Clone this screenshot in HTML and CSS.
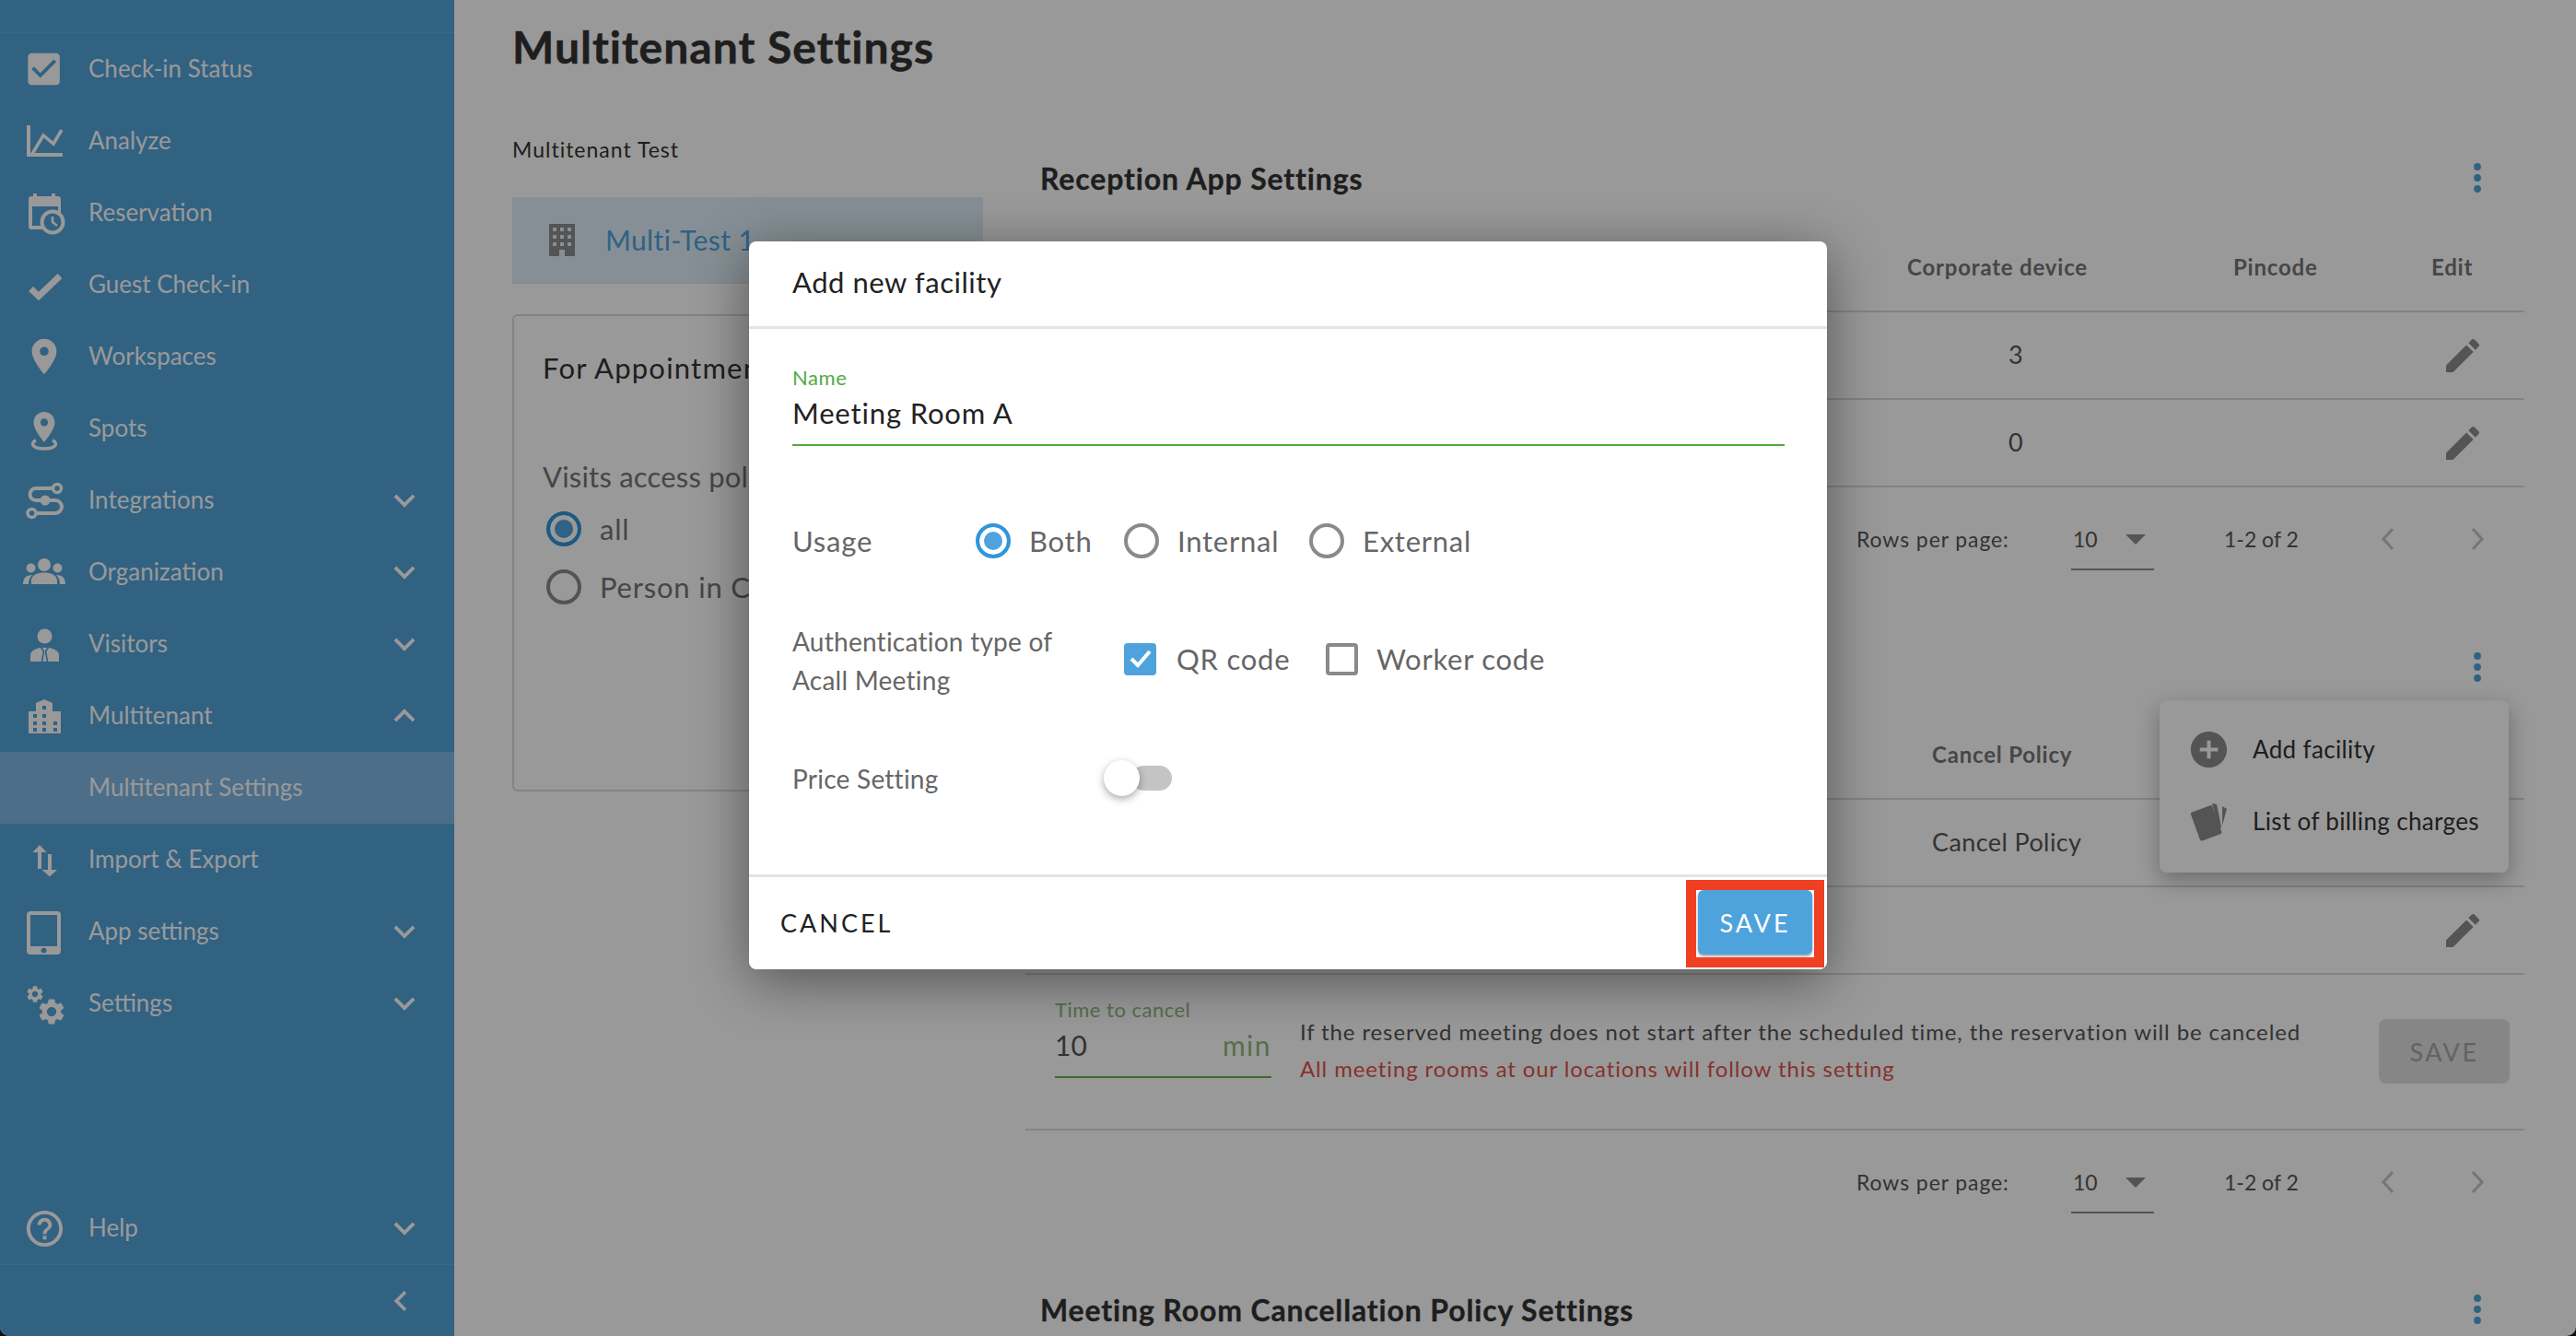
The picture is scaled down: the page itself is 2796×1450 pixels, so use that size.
FILE: index.html
```html
<!DOCTYPE html>
<html lang="en">
<head>
<meta charset="utf-8">
<title>Multitenant Settings</title>
<link rel="stylesheet" href="styles.css">
</head>
<body>
<svg class="defs" width="0" height="0">
  <symbol id="i-edit" viewBox="0 0 24 24"><path d="M3 17.25V21h3.75L17.81 9.94l-3.75-3.75L3 17.25zM20.71 7.04c.39-.39.39-1.02 0-1.41l-2.34-2.34c-.39-.39-1.02-.39-1.41 0l-1.83 1.83 3.75 3.75 1.83-1.83z"/></symbol>
  <symbol id="i-down" viewBox="0 0 24 24"><path d="M16.59 8.59L12 13.17 7.41 8.59 6 10l6 6 6-6z"/></symbol>
  <symbol id="i-up" viewBox="0 0 24 24"><path d="M7.41 15.41L12 10.83l4.59 4.58L18 14l-6-6-6 6z"/></symbol>
  <symbol id="i-gear" viewBox="0 0 24 24"><path d="M19.14 12.94c.04-.3.06-.61.06-.94 0-.32-.02-.64-.07-.94l2.03-1.58c.18-.14.23-.41.12-.61l-1.92-3.32c-.12-.22-.37-.29-.59-.22l-2.39.96c-.5-.38-1.03-.7-1.62-.94l-.36-2.54c-.04-.24-.24-.41-.48-.41h-3.84c-.24 0-.43.17-.47.41l-.36 2.54c-.59.24-1.13.57-1.62.94l-2.39-.96c-.22-.08-.47 0-.59.22L2.74 8.87c-.12.21-.08.47.12.61l2.03 1.58c-.05.3-.09.63-.09.94s.02.64.07.94l-2.03 1.58c-.18.14-.23.41-.12.61l1.92 3.32c.12.22.37.29.59.22l2.39-.96c.5.38 1.03.7 1.62.94l.36 2.54c.05.24.24.41.48.41h3.84c.24 0 .44-.17.47-.41l.36-2.54c.59-.24 1.13-.56 1.62-.94l2.39.96c.22.08.47 0 .59-.22l1.92-3.32c.12-.22.07-.47-.12-.61l-2.01-1.58zM12 15.6c-1.98 0-3.6-1.62-3.6-3.6s1.62-3.6 3.6-3.6 3.6 1.62 3.6 3.6-1.62 3.6-3.6 3.6z"/></symbol>
  <symbol id="i-kebab" viewBox="0 0 12 36"><circle cx="6" cy="6" r="3.9"/><circle cx="6" cy="18" r="3.9"/><circle cx="6" cy="30" r="3.9"/></symbol>
  <symbol id="i-prev" viewBox="0 0 20 26"><path d="M15 2L5 13l10 11" fill="none" stroke="currentColor" stroke-width="3"/></symbol>
  <symbol id="i-next" viewBox="0 0 20 26"><path d="M5 2l10 11L5 24" fill="none" stroke="currentColor" stroke-width="3"/></symbol>
</svg>

<div class="app">
  <nav class="sidebar">
    <div class="side-top"></div>
    <a class="nav-row"><span class="nav-icon"><svg width="46" height="46" viewBox="0 0 24 24"><path d="M19 3H5c-1.1 0-2 .9-2 2v14c0 1.1.9 2 2 2h14c1.1 0 2-.9 2-2V5c0-1.1-.9-2-2-2zm-9 14l-5-5 1.41-1.41L10 14.17l7.59-7.59L19 8l-9 9z" transform="translate(-.2 0)"/></svg></span><span class="nav-text">Check-in Status</span></a>
    <a class="nav-row"><span class="nav-icon"><svg width="48" height="48" viewBox="0 0 48 48"><path class="st" stroke-width="4" d="M7 7v32h37"/><path class="st" stroke-width="3.5" d="M11 38l12-20 11 9 9-15"/></svg></span><span class="nav-text">Analyze</span></a>
    <a class="nav-row"><span class="nav-icon"><svg width="48" height="48" viewBox="0 0 48 48"><path fill-rule="evenodd" d="M12 3h4v3h16V3h4v3h3a3 3 0 0 1 3 3v30a3 3 0 0 1-3 3H10a3 3 0 0 1-3-3V9a3 3 0 0 1 3-3h2zM11 17v21h28V17z"/><circle cx="33" cy="34" r="13.500"/><circle class="bg" cx="33" cy="34" r="9.500"/><path class="st" stroke-width="2.600" d="M33 28v6l5 4"/></svg></span><span class="nav-text">Reservation</span></a>
    <a class="nav-row"><span class="nav-icon"><svg width="48" height="48" viewBox="0 0 48 48"><path class="st" stroke-width="7" d="M9.500 28.500l8.500 8L41 14.500"/></svg></span><span class="nav-text">Guest Check-in</span></a>
    <a class="nav-row"><span class="nav-icon"><svg width="46" height="46" viewBox="0 0 24 24"><path d="M12 2C8.130 2 5 5.130 5 9c0 5.250 7 13 7 13s7-7.750 7-13c0-3.870-3.130-7-7-7zm0 9.500c-1.380 0-2.500-1.120-2.500-2.500s1.120-2.500 2.500-2.500 2.500 1.120 2.500 2.500-1.120 2.500-2.500 2.500z"/></svg></span><span class="nav-text">Workspaces</span></a>
    <a class="nav-row"><span class="nav-icon"><svg width="48" height="48" viewBox="0 0 48 48"><path transform="translate(4.300 2.700) scale(1.640)" d="M12 2C8.130 2 5 5.130 5 9c0 5.250 7 13 7 13s7-7.750 7-13c0-3.870-3.130-7-7-7zm0 9.500c-1.380 0-2.500-1.120-2.500-2.500s1.120-2.500 2.500-2.500 2.500 1.120 2.500 2.500-1.120 2.500-2.500 2.500z"/><path class="st" stroke-width="3.500" d="M15 37c-6 2-5 9 9 9s15-7 9-9"/></svg></span><span class="nav-text">Spots</span></a>
    <a class="nav-row"><span class="nav-icon"><svg width="48" height="48" viewBox="0 0 48 48"><path class="st" stroke-width="4" d="M33 11H15a6.500 6.500 0 0 0 0 13h21a7 7 0 0 1 0 14H15"/><circle class="st" stroke-width="3.500" cx="38" cy="11" r="4.500"/><circle class="st" stroke-width="3.500" cx="10.500" cy="38" r="4.500"/><circle cx="25" cy="24" r="5.500"/></svg></span><span class="nav-text">Integrations</span><svg class="chev" width="46" height="46"><use href="#i-down"/></svg></a>
    <a class="nav-row"><span class="nav-icon"><svg width="48" height="48" viewBox="0 0 48 48"><circle cx="24" cy="16" r="7"/><circle cx="9.500" cy="19.500" r="5"/><circle cx="38.500" cy="19.500" r="5"/><path d="M10 37v-4c0-6 7-8.500 14-8.500S38 27 38 33v4zM1 37c0-6 3-10 10-10-2 2-4 5-4 10zM47 37c0-6-3-10-10-10 2 2 4 5 4 10z"/></svg></span><span class="nav-text">Organization</span><svg class="chev" width="46" height="46"><use href="#i-down"/></svg></a>
    <a class="nav-row"><span class="nav-icon"><svg width="48" height="48" viewBox="0 0 48 48"><circle cx="24.500" cy="15.500" r="8"/><path d="M9 43v-7c0-4 4-6 10-8h11c6 2 10 4 10 8v7z"/><path class="st-bg" stroke-width="1.600" d="M20 27l3.500 5-2 11M29 27l-3.500 5 2 11"/></svg></span><span class="nav-text">Visitors</span><svg class="chev" width="46" height="46"><use href="#i-down"/></svg></a>
    <a class="nav-row"><span class="nav-icon"><svg width="48" height="48" viewBox="0 0 48 48"><path d="M7 19h8v-9l9-4 9 4v9h9v24H7z"/><g class="bg"><rect x="22" y="13" width="4" height="4"/><rect x="12" y="22" width="4" height="4"/><rect x="22" y="22" width="4" height="4"/><rect x="12" y="30" width="4" height="4"/><rect x="22" y="30" width="4" height="4"/><rect x="34" y="30" width="4" height="4"/><rect x="12" y="37" width="4" height="4"/><rect x="22" y="37" width="4" height="4"/><rect x="34" y="37" width="4" height="4"/></g></svg></span><span class="nav-text">Multitenant</span><svg class="chev" width="46" height="46"><use href="#i-up"/></svg></a>
    <a class="nav-row nav-active"><span class="nav-icon"></span><span class="nav-text">Multitenant Settings</span></a>
    <a class="nav-row"><span class="nav-icon"><svg width="48" height="48" viewBox="0 0 48 48"><path d="M19 8l7.500 8H21v18h-4V16h-5.500zM28 18h4v17h6l-8 7.500L21.500 35H28z"/></svg></span><span class="nav-text">Import &amp; Export</span></a>
    <a class="nav-row"><span class="nav-icon"><svg width="48" height="52" viewBox="0 0 48 52"><path fill-rule="evenodd" d="M9 4h29a4 4 0 0 1 4 4v39a4 4 0 0 1-4 4H9a4 4 0 0 1-4-4V8a4 4 0 0 1 4-4zM9 8v34h29V8zM23.500 43.500a3 3 0 1 0 .01 0z"/></svg></span><span class="nav-text">App settings</span><svg class="chev" width="46" height="46"><use href="#i-down"/></svg></a>
    <a class="nav-row"><span class="nav-icon"><svg width="48" height="48" viewBox="0 0 48 48"><use href="#i-gear" x="3" y="3" width="22" height="22"/><use href="#i-gear" x="15" y="16" width="34" height="34"/></svg></span><span class="nav-text">Settings</span><svg class="chev" width="46" height="46"><use href="#i-down"/></svg></a>
    <div class="side-space"></div>
    <a class="nav-row"><span class="nav-icon"><svg width="47" height="47" viewBox="0 0 24 24"><path d="M11 18h2v-2h-2v2zm1-16C6.480 2 2 6.480 2 12s4.480 10 10 10 10-4.480 10-10S17.520 2 12 2zm0 18c-4.410 0-8-3.590-8-8s3.590-8 8-8 8 3.590 8 8-3.590 8-8 8zm0-14c-2.210 0-4 1.790-4 4h2c0-1.100.900-2 2-2s2 .900 2 2c0 2-3 1.750-3 5h2c0-2.250 3-2.500 3-5 0-2.210-1.790-4-4-4z"/></svg></span><span class="nav-text">Help</span><svg class="chev" width="46" height="46"><use href="#i-down"/></svg></a>
    <div class="side-collapse"><svg width="44" height="44" viewBox="0 0 24 24"><path d="M15.410 7.410L14 6l-6 6 6 6 1.410-1.410L10.830 12z"/></svg></div>
  </nav>

  <main class="main">
    <h1 class="page-title">Multitenant Settings</h1>
    <div class="columns">
      <section class="col-left">
        <p class="tenant-label">Multitenant Test</p>
        <div class="tenant-item">
          <svg class="tenant-icon" width="28" height="35" viewBox="0 0 28 35"><path fill-rule="evenodd" d="M0 0h28v35H17v-7h-6v7H0zM4 4v4h4V4zm8 0v4h4V4zm8 0v4h4V4zM4 12v4h4v-4zm8 0v4h4v-4zm8 0v4h4v-4zM4 20v4h4v-4zm8 0v4h4v-4zm8 0v4h4v-4z"/></svg>
          <span class="tenant-name">Multi-Test 1</span>
        </div>
        <div class="policy-card">
          <h3 class="policy-title">For Appointment</h3>
          <p class="policy-sub">Visits access policy</p>
          <div class="policy-opt"><span class="radio radio-on"></span><span>all</span></div>
          <div class="policy-opt"><span class="radio"></span><span>Person in Charge</span></div>
        </div>
      </section>

      <section class="col-right">
        <div class="sec-head sec-first"><h2 class="sec-title">Reception App Settings</h2><svg class="kebab" width="12" height="36"><use href="#i-kebab"/></svg></div>
        <div class="t-row t-head"><span class="c-corp">Corporate device</span><span class="c-pin">Pincode</span><span class="c-edit">Edit</span></div>
        <div class="t-row t-body"><span class="c-num">3</span><svg class="pencil" width="48" height="48"><use href="#i-edit"/></svg></div>
        <div class="t-row t-body"><span class="c-num">0</span><svg class="pencil" width="48" height="48"><use href="#i-edit"/></svg></div>
        <div class="pager">
          <span class="pg-label">Rows per page:</span>
          <span class="pg-select"><span>10</span><i class="caret"></i></span>
          <span class="pg-range">1-2 of 2</span>
          <svg class="pg-prev" width="20" height="26"><use href="#i-prev"/></svg>
          <svg class="pg-next" width="20" height="26"><use href="#i-next"/></svg>
        </div>

        <div class="sec-head sec-second"><span></span><svg class="kebab" width="12" height="36"><use href="#i-kebab"/></svg></div>
        <div class="t-row t-head"><span class="c-cancel">Cancel Policy</span></div>
        <div class="t-row t-body"><span class="c-cancel">Cancel Policy</span></div>
        <div class="t-row t-body"><svg class="pencil" width="48" height="48"><use href="#i-edit"/></svg></div>
        <div class="cancel-row">
          <div class="time-field">
            <span class="time-label">Time to cancel</span>
            <div class="time-value"><span>10</span><span class="time-unit">min</span></div>
          </div>
          <div class="cancel-notes">
            <p class="note">If the reserved meeting does not start after the scheduled time, the reservation will be canceled</p>
            <p class="note note-red">All meeting rooms at our locations will follow this setting</p>
          </div>
          <span class="save-disabled">SAVE</span>
        </div>
        <div class="pager">
          <span class="pg-label">Rows per page:</span>
          <span class="pg-select"><span>10</span><i class="caret"></i></span>
          <span class="pg-range">1-2 of 2</span>
          <svg class="pg-prev" width="20" height="26"><use href="#i-prev"/></svg>
          <svg class="pg-next" width="20" height="26"><use href="#i-next"/></svg>
        </div>

        <div class="sec-head sec-third"><h2 class="sec-title">Meeting Room Cancellation Policy Settings</h2><svg class="kebab" width="12" height="36"><use href="#i-kebab"/></svg></div>
      </section>
    </div>

    <div class="menu">
      <div class="menu-item"><svg width="47" height="47" viewBox="0 0 24 24"><path d="M12 2C6.480 2 2 6.480 2 12s4.480 10 10 10 10-4.480 10-10S17.520 2 12 2zm5 11h-4v4h-2v-4H7v-2h4V7h2v4h4v2z"/></svg><span>Add facility</span></div>
      <div class="menu-item"><svg width="47" height="47" viewBox="0 0 47 47"><rect x="8" y="9" width="25" height="33" rx="2" transform="rotate(-20 20 25)"/><path d="M27 4l5 1 5 24-2 5zM38 7l5 3-5 18z"/></svg><span>List of billing charges</span></div>
    </div>
  </main>
</div>

<div class="backdrop"></div>

<div class="dialog">
  <header class="dlg-head">Add new facility</header>
  <div class="dlg-body">
    <div class="name-field">
      <label class="name-label">Name</label>
      <div class="name-value">Meeting Room A</div>
    </div>
    <div class="usage-row">
      <span class="usage-label">Usage</span>
      <span class="opt opt-both"><span class="radio radio-on"></span><span>Both</span></span>
      <span class="opt opt-int"><span class="radio"></span><span>Internal</span></span>
      <span class="opt"><span class="radio"></span><span>External</span></span>
    </div>
    <div class="auth-row">
      <span class="f-label auth-label">Authentication type of<br>Acall Meeting</span>
      <span class="opt opt-qr"><span class="check check-on"><svg width="34" height="34" viewBox="0 0 34 34"><path d="M7 17l7 7L27 9" fill="none" stroke="#fff" stroke-width="4"/></svg></span><span>QR code</span></span>
      <span class="opt"><span class="check"></span><span>Worker code</span></span>
    </div>
    <div class="price-row">
      <span class="f-label">Price Setting</span>
      <span class="switch"><i class="thumb"></i></span>
    </div>
  </div>
  <footer class="dlg-foot">
    <span class="btn-cancel">CANCEL</span>
    <span class="btn-save">SAVE</span>
  </footer>
  <div class="callout"></div>
</div>
</body>
</html>
```

FILE: styles.css
```css
* { box-sizing: border-box; }
html, body { margin: 0; height: 100%; }
body {
  width: 2796px; height: 1450px; overflow: hidden; position: relative;
  background: #1a1a1a;
  font-family: Lato, "Open Sans", "Liberation Sans", sans-serif;
  color: #333;
}
.defs { position: absolute; }
p, h1, h2, h3 { margin: 0; font-weight: normal; }

.app { display: flex; height: 1450px; background: #fff; border-radius: 0 0 10px 10px; overflow: hidden; }

/* sidebar */
.sidebar { width: 493px; flex: none; background: #52a3d9; display: flex; flex-direction: column; fill: #fff; color: #fff; }
.side-top { height: 36px; flex: none; border-bottom: 1px solid #67aede; }
.nav-row { height: 78px; flex: none; display: flex; align-items: center; font-size: 26px; position: relative; padding-right: 31px; }
.nav-icon { width: 96px; flex: none; display: flex; justify-content: center; align-items: center; }
.nav-text { flex: 1; position: relative; top: -1px; }
.nav-active { background: #7fb7e3; }
.side-space { flex: 1; }
.side-collapse { height: 78px; flex: none; border-top: 1px solid #67aede; display: flex; justify-content: flex-end; align-items: center; padding-right: 36px; }
.chev { flex: none; }
.st { fill: none; stroke: #fff; }
.st-bg { fill: none; stroke: #52a3d9; }
.bg { fill: #52a3d9; }

/* main */
.main { flex: 1; min-width: 0; position: relative; padding: 0 56px 0 63px; overflow: hidden; }
.page-title { font-size: 48px; font-weight: 700; line-height: 60px; padding-top: 21px; height: 81px; letter-spacing: 1px; color: #333; margin: 0; -webkit-text-stroke: .5px #333; }
.columns { display: grid; grid-template-columns: 511px 1627px; column-gap: 46px; }

.tenant-label { margin-top: 66px; font-size: 23px; line-height: 30px; letter-spacing: 1px; }
.tenant-item { margin-top: 37px; height: 94px; background: #dfeef8; display: flex; align-items: center; padding-left: 40px; border-bottom: 1px solid #e2e2e2; }
.tenant-icon { fill: #8c8c8c; flex: none; }
.tenant-name { margin-left: 33px; font-size: 30px; letter-spacing: .4px; color: #4fa3dc; position: relative; top: -1px; }
.policy-card { margin-top: 33px; height: 518px; border: 2px solid #dadada; border-radius: 6px; padding: 0 0 0 31px; white-space: nowrap; overflow: hidden; }
.policy-title { font-size: 31px; line-height: 40px; margin-top: 36px; letter-spacing: 1.200px; }
.policy-sub { font-size: 31px; line-height: 40px; margin-top: 78px; color: #757575; letter-spacing: .2px; }
.policy-opt { display: flex; align-items: center; gap: 20px; height: 63px; margin-left: 4px; font-size: 31px; color: #757575; letter-spacing: .8px; }
.policy-sub + .policy-opt { margin-top: 5px; }

.radio { width: 38px; height: 38px; border-radius: 50%; border: 4px solid #8a8a8a; flex: none; background: #fff; display: inline-block; }
.radio-on { border-color: #2f96d9; background: #4fa3dc; box-shadow: inset 0 0 0 5px #fff; }

.sec-head { height: 60px; display: flex; align-items: center; justify-content: space-between; padding: 0 45px 0 16px; }
.sec-first { margin-top: 82px; margin-bottom: 16px; }
.sec-second { margin-top: 53px; margin-bottom: 14px; }
.sec-third { margin-top: 52px; }
.sec-title { font-size: 32px; font-weight: 700; color: #333; letter-spacing: .85px; -webkit-text-stroke: .3px #333; }
.kebab { fill: #4fa3dc; flex: none; }

.t-row { display: grid; grid-template-columns: 957px 354px 215px 101px; align-items: center; border-bottom: 2px solid #dadada; position: relative; }
.t-head { height: 100px; font-size: 24px; font-weight: 700; color: #757575; letter-spacing: .8px; padding-top: 2px; }
.t-head > span { white-space: nowrap; }
.c-corp { grid-column: 2; }
.c-pin { grid-column: 3; }
.c-edit { grid-column: 4; }
.t-body { height: 95px; font-size: 27px; color: #555; padding-bottom: 2px; }
.c-num { grid-column: 2; margin-left: 110px; white-space: nowrap; }
.pencil { fill: #8c8c8c; position: absolute; left: 1536px; top: 23px; }
.c-cancel { grid-column: 2; margin-left: 27px; white-space: nowrap; }
.t-body .c-cancel { letter-spacing: .4px; }

.pager { height: 112px; display: flex; align-items: center; padding-left: 902px; font-size: 23px; color: #555; }
.pg-label { width: 233px; flex: none; letter-spacing: .9px; }
.pg-select { width: 90px; height: 66px; flex: none; border-bottom: 2px solid #8c8c8c; display: flex; align-items: center; position: relative; top: 1px; padding-left: 2px; }
.caret { width: 0; height: 0; margin-left: 30px; border-left: 11px solid transparent; border-right: 11px solid transparent; border-top: 11px solid #8c8c8c; }
.pg-range { margin-left: 76px; width: 168px; flex: none; }
.pg-prev, .pg-next { color: #c4c4c4; flex: none; }
.pg-next { margin-left: 77px; }

.cancel-row { height: 169px; border-bottom: 2px solid #dadada; display: flex; align-items: flex-start; padding-left: 32px; }
.time-field { width: 235px; margin-top: 25px; flex: none; }
.time-label { display: block; font-size: 22px; line-height: 26px; color: #8fb77e; letter-spacing: .5px; }
.time-value { display: flex; justify-content: space-between; align-items: flex-start; margin-top: 3px; height: 58px; font-size: 30px; line-height: 44px; color: #555; border-bottom: 2px solid #6ab04c; }
.time-unit { color: #8fb77e; letter-spacing: 1.500px; }
.cancel-notes { margin-left: 31px; width: 1171px; margin-top: 47px; flex: none; }
.note { font-size: 24px; line-height: 30px; color: #555; letter-spacing: .88px; white-space: nowrap; }
.note-red { color: #e0544c; margin-top: 10px; }
.save-disabled { width: 142px; height: 70px; margin-top: 48px; background: #e0e0e0; border-radius: 8px; color: #a6a6a6; font-size: 27px; letter-spacing: 2.500px; display: flex; align-items: center; justify-content: center; flex: none; }

/* menu */
.menu { position: absolute; left: 1851px; top: 760px; width: 379px; height: 187px; background: #fff; border-radius: 8px; box-shadow: 0 8px 24px rgba(0,0,0,.3); padding: 14px 0 0 30px; }
.menu-item { height: 78px; display: flex; align-items: center; gap: 24px; font-size: 26px; color: #333; letter-spacing: .35px; fill: #8c8c8c; white-space: nowrap; }

/* overlay + dialog */
.backdrop { position: absolute; inset: 0; background: rgba(0,0,0,.4); }
.dialog { position: absolute; left: 813px; top: 262px; width: 1170px; height: 790px; background: #fff; border-radius: 8px; box-shadow: 0 12px 60px rgba(0,0,0,.45); display: flex; flex-direction: column; color: #333; }
.dlg-head { height: 95px; flex: none; border-bottom: 3px solid #e4e4e4; padding: 0 0 4px 47px; display: flex; align-items: center; font-size: 31px; letter-spacing: .55px; color: #222; }
.dlg-body { flex: 1; padding: 0 46px 0 47px; border-bottom: 3px solid #e4e4e4; }
.name-field { margin-top: 40px; height: 87px; border-bottom: 2px solid #53a93f; }
.name-label { display: block; font-size: 22px; line-height: 26px; color: #53a93f; letter-spacing: .6px; }
.name-value { font-size: 31px; line-height: 40px; margin-top: 5px; color: #222; letter-spacing: .85px; }
.usage-row { display: flex; align-items: center; margin-top: 83px; height: 40px; }
.f-label { font-size: 28px; color: #666; letter-spacing: .25px; }
.usage-label { width: 199px; flex: none; font-size: 31px; color: #666; letter-spacing: .8px; }
.opt { display: inline-flex; align-items: center; font-size: 31px; color: #666; letter-spacing: .75px; white-space: nowrap; gap: 20px; }
.opt-both { width: 161px; flex: none; }
.opt-int { width: 201px; flex: none; }
.auth-row { display: flex; align-items: center; margin-top: 66px; height: 84px; }
.auth-label { width: 360px; line-height: 42px; flex: none; position: relative; top: 2px; }
.opt-qr { width: 219px; flex: none; gap: 22px; }
.check { width: 35px; height: 35px; border: 4px solid #8a8a8a; border-radius: 4px; display: inline-flex; flex: none; background: #fff; }
.check-on { border: 0; background: #4fa3dc; align-items: center; justify-content: center; }
.price-row { display: flex; align-items: center; margin-top: 68px; height: 40px; position: relative; }
.switch { position: absolute; left: 368px; top: 6px; width: 44px; height: 27px; border-radius: 14px; background: #c4c4c4; }
.thumb { position: absolute; left: -30px; top: -6px; width: 39px; height: 39px; border-radius: 50%; background: #fff; box-shadow: 0 3px 8px rgba(0,0,0,.35); }
.dlg-foot { height: 100px; flex: none; display: flex; align-items: center; justify-content: space-between; padding: 0 16px 2px 34px; }
.btn-cancel { font-size: 27px; letter-spacing: 3px; color: #222; }
.btn-save { width: 124px; height: 70px; background: #4fa3dc; border-radius: 6px; color: #fff; font-size: 27px; letter-spacing: 3px; display: flex; align-items: center; justify-content: center; box-shadow: 0 2px 3px rgba(0,0,0,.35); }
.callout { position: absolute; left: 1017px; top: 693px; width: 150px; height: 95px; border: 10px solid #f04023; box-shadow: inset 0 0 0 1px #f04023; pointer-events: none; }
```
